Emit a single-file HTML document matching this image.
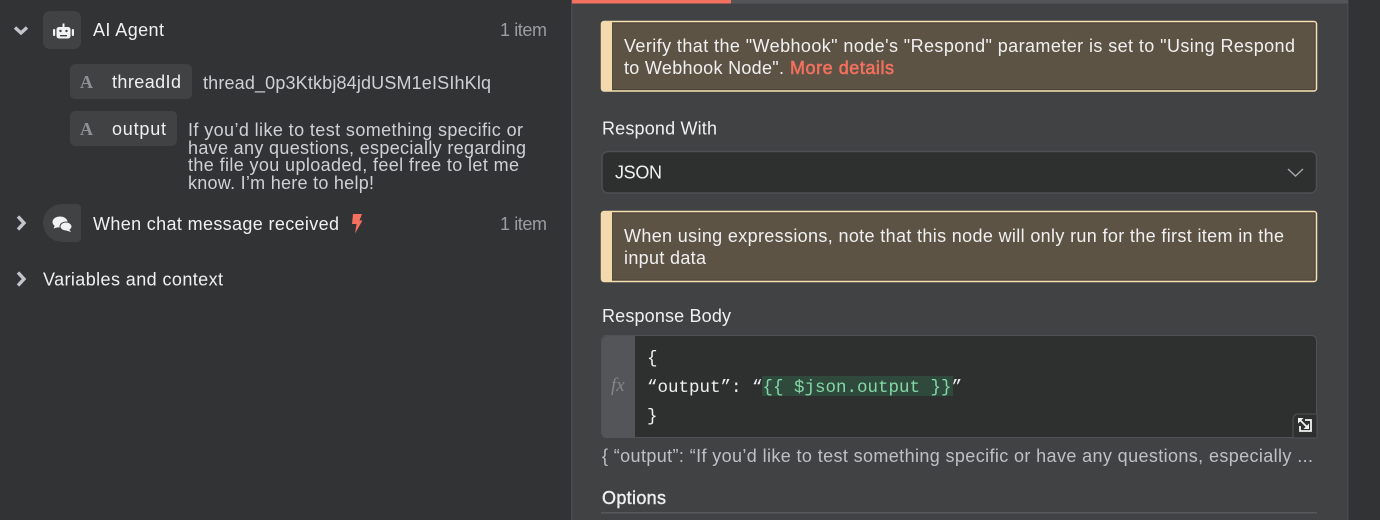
<!DOCTYPE html>
<html><head><meta charset="utf-8"><style>
html,body{margin:0;padding:0;background:#323335;width:1380px;height:520px;overflow:hidden}
svg{display:block}
text{font-family:"Liberation Sans",sans-serif;font-size:18px;fill:#f0f0f2;white-space:pre}
.v{fill:#cfd0d6;font-size:18px}
.m{fill:#9c9da3}
.c{font-family:"Liberation Mono",monospace;font-size:17.5px}
.p{fill:#bfc0c6}
</style></head><body>
<svg width="1380" height="520" viewBox="0 0 1380 520" xmlns="http://www.w3.org/2000/svg">
<rect width="1380" height="520" fill="#323335"/>
<!-- right panel -->
<rect x="571" y="0" width="777" height="520" fill="#414244"/>
<rect x="571" y="0" width="1.500" height="520" fill="#48494c"/>
<rect x="1347" y="0" width="1.500" height="520" fill="#48494c"/>
<rect x="572" y="0" width="776" height="3.500" fill="#545558"/>
<rect x="572" y="0" width="159" height="3.500" fill="#f4705f"/>

<!-- left tree -->
<path d="M15 27.500l6 5.500 6-5.500" fill="none" stroke="#c3c4cc" stroke-width="3.400"/>
<rect x="43" y="11" width="38" height="38" rx="7" fill="#414244"/>
<g fill="#f2f2f4">
<rect x="56.500" y="27" width="14" height="11.500" rx="2.500"/>
<rect x="62.500" y="23.500" width="2" height="4"/>
<rect x="53" y="29" width="2.200" height="7" rx="1"/>
<rect x="71.800" y="29" width="2.200" height="7" rx="1"/>
</g>
<g fill="#414244"><circle cx="60.500" cy="31" r="1.200"/><circle cx="66.500" cy="31" r="1.200"/><rect x="60" y="35" width="7" height="1.400"/></g>
<text x="93" y="36" textLength="71">AI Agent</text>
<text class="m" x="500" y="36" textLength="47">1 item</text>

<rect x="70" y="64" width="122" height="35" rx="5" fill="#414244"/>
<text x="80" y="88" style="font-size:18px;font-weight:700;fill:#8f9097;font-family:'Liberation Serif',serif" textLength="14">A</text>
<text x="112" y="88" textLength="69">threadId</text>
<text class="v" x="203" y="89" textLength="288">thread_0p3Ktkbj84jdUSM1eISIhKlq</text>

<rect x="70" y="111" width="107" height="35" rx="5" fill="#414244"/>
<text x="80" y="135" style="font-size:18px;font-weight:700;fill:#8f9097;font-family:'Liberation Serif',serif" textLength="14">A</text>
<text x="112" y="135" textLength="54">output</text>
<text class="v" x="188" y="136" textLength="335">If you’d like to test something specific or</text>
<text class="v" x="188" y="154" textLength="338">have any questions, especially regarding</text>
<text class="v" x="188" y="171" textLength="331">the file you uploaded, feel free to let me</text>
<text class="v" x="188" y="189" textLength="186">know. I’m here to help!</text>

<path d="M18 217l6 6.500-6 6.500" fill="none" stroke="#c3c4cc" stroke-width="3.400" transform="translate(0 -.5)"/>
<path d="M62 204h15a4 4 0 0 1 4 4v30a4 4 0 0 1-4 4h-15a19 19 0 0 1 0-38z" fill="#414244"/>
<ellipse cx="60" cy="222" rx="7.500" ry="5.500" fill="#f2f2f4"/>
<path d="M55 225l-1.500 3.500 5-1.500z" fill="#f2f2f4"/>
<ellipse cx="66" cy="226.500" rx="6" ry="4.500" fill="#f2f2f4" stroke="#414244" stroke-width="1"/>
<path d="M69 229l2 3-5-1.500z" fill="#f2f2f4"/>
<text x="93" y="230" textLength="246">When chat message received</text>
<path d="M353 214h9l-2.500 6.500h3l-7.500 13 1.500-9.500h-4.500z" fill="#f4705f"/>
<text class="m" x="500" y="230" textLength="47">1 item</text>

<path d="M18 272.500l6 6.500-6 6.500" fill="none" stroke="#c3c4cc" stroke-width="3.400"/>
<text x="43" y="285.500" textLength="180">Variables and context</text>

<!-- notice 1 -->
<rect x="601.500" y="21.500" width="715" height="69.500" rx="2.500" fill="#5d5344" stroke="#f6dfb0" stroke-width="1.500"/>
<rect x="612" y="23" width="703" height="66.500" fill="none" stroke="#4a4338" stroke-width="1"/>
<path d="M604 21h8v70h-8a3 3 0 0 1-3-3v-64a3 3 0 0 1 3-3z" fill="#f3d9ab"/>
<text x="624" y="52" textLength="671">Verify that the "Webhook" node's "Respond" parameter is set to "Using Respond</text>
<text x="624" y="74" textLength="160">to Webhook Node".</text>
<text x="790" y="74" textLength="104" style="fill:#f4705f;stroke:#f4705f;stroke-width:.55">More details</text>

<text x="602" y="134.500" textLength="115">Respond With</text>
<rect x="602" y="151.500" width="714.500" height="41.500" rx="6" fill="#2e302f" stroke="#4e4f53" stroke-width="1.500"/>
<text x="615" y="178.500" textLength="47">JSON</text>
<path d="M1288 169l7.500 7 7.500-7" fill="none" stroke="#a6a7ae" stroke-width="1.400"/>

<!-- notice 2 -->
<rect x="601.500" y="211.500" width="715" height="70" rx="2.500" fill="#5d5344" stroke="#f6dfb0" stroke-width="1.500"/>
<rect x="612" y="213" width="703" height="67" fill="none" stroke="#4a4338" stroke-width="1"/>
<path d="M604 211h8v71h-8a3 3 0 0 1-3-3v-65a3 3 0 0 1 3-3z" fill="#f3d9ab"/>
<text x="624" y="242" textLength="660">When using expressions, note that this node will only run for the first item in the</text>
<text x="624" y="264" textLength="82">input data</text>

<text x="602" y="322" textLength="129">Response Body</text>

<!-- code -->
<rect x="601.500" y="335.500" width="715" height="102" rx="5" fill="#2e302f" stroke="#515256" stroke-width="1"/>
<path d="M635 336h-28a5 5 0 0 0-5 5v92a5 5 0 0 0 5 5h28z" fill="#545558"/>
<text x="611" y="391" style="font-family:'Liberation Serif',serif;font-style:italic;font-size:19px;fill:#85868b">fx</text>
<rect x="762" y="376" width="191" height="20" fill="#2f4a3c"/>
<text class="c" x="647" y="363">{</text>
<text class="c" x="647" y="392">“output”: “<tspan fill="#84d8a6">{{ $json.output }}</tspan>”</text>
<text class="c" x="647" y="421">}</text>
<path d="M1293 438v-19a5 5 0 0 1 5-5h19v24z" fill="#2e302f" stroke="#515256" stroke-width="1"/>
<path d="M1305 420h6v11h-11v-5" fill="none" stroke="#f2f2f4" stroke-width="1.800"/>
<path d="M1299 419l8.500 8.500" fill="none" stroke="#f2f2f4" stroke-width="1.800"/>
<path d="M1298 418h5.500l-5.500 5.500zM1309 429h-5.500l5.500-5.500z" fill="#f2f2f4"/>

<text class="p" x="602" y="462" textLength="711">{ “output”: “If you’d like to test something specific or have any questions, especially ...</text>
<text x="602" y="504" textLength="64" style="fill:#eeeef0;stroke:#eeeef0;stroke-width:.4">Options</text>
<rect x="601" y="512" width="716" height="1.500" fill="#57585b"/>
</svg>
</body></html>
